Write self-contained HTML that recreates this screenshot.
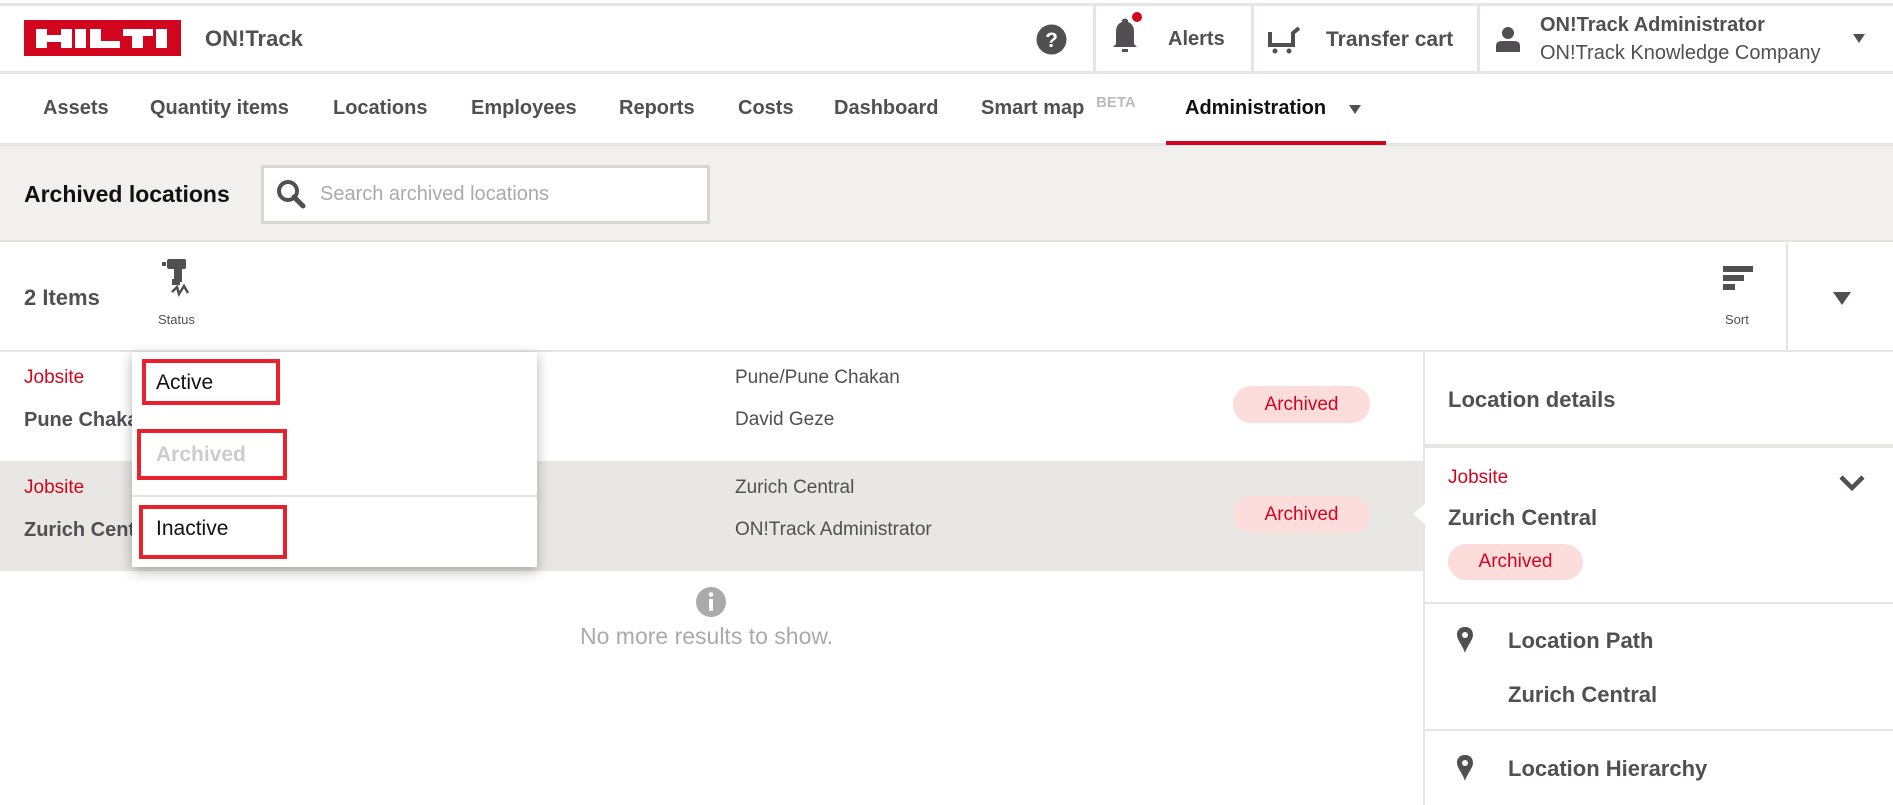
<!DOCTYPE html>
<html><head><meta charset="utf-8"><style>
*{margin:0;padding:0;box-sizing:border-box}
body{width:1893px;height:805px;overflow:hidden;background:#fff;font-family:"Liberation Sans",Arial,sans-serif;color:#524f53;position:relative}
.a{position:absolute;white-space:nowrap}
.b{font-weight:bold}
.nav{font-size:20px;font-weight:bold;top:97px}
.red{color:#d2051e}
.pill{position:absolute;background:#fddcdc;color:#d2051e;font-size:19px;border-radius:18px;text-align:center}
.box{position:absolute;border:4px solid #e8212c}
</style></head><body>
<div class="a" style="left:0;top:3px;width:1893px;height:3px;background:#e6e5e3"></div>
<svg class="a" style="left:24px;top:20px" width="157" height="36"><rect width="157" height="36" fill="#d2051e"/>
<g fill="#fff"><rect x="12" y="9" width="11" height="19"/><rect x="37" y="9" width="11" height="19"/><rect x="23" y="15" width="14" height="7"/>
<rect x="51" y="9" width="11" height="19"/>
<rect x="66" y="9" width="11" height="19"/><rect x="77" y="21" width="19" height="7"/>
<rect x="99" y="9" width="30" height="7"/><rect x="108" y="9" width="11" height="19"/>
<rect x="132" y="9" width="11" height="19"/></g></svg>
<div class="a b" style="left:205px;top:26px;font-size:22px">ON!Track</div>
<div class="a" style="left:0;top:71px;width:1893px;height:3px;background:#e6e5e3"></div>
<div class="a" style="left:1093px;top:5px;width:3px;height:66px;background:#e6e5e3"></div>
<div class="a" style="left:1251px;top:5px;width:3px;height:66px;background:#e6e5e3"></div>
<div class="a" style="left:1477px;top:5px;width:3px;height:66px;background:#e6e5e3"></div>
<svg class="a" style="left:1036px;top:24px" width="31" height="31"><circle cx="15.5" cy="15.5" r="15" fill="#524f53"/><text x="15.5" y="23" fill="#fff" font-size="21" font-weight="bold" text-anchor="middle" font-family="Liberation Sans">?</text></svg>
<svg class="a" style="left:1110px;top:12px" width="34" height="44"><path d="M6 32 L6 20 Q6 12 12 10 L12 8 Q15 5 18 8 L18 10 Q24 12 24 20 L24 32 L27 35 L3 35 Z" fill="#524f53"/><rect x="12" y="37" width="6" height="3" fill="#524f53"/><circle cx="27" cy="5" r="5" fill="#d2051e"/></svg>
<div class="a b" style="left:1168px;top:28px;font-size:20px">Alerts</div>
<svg class="a" style="left:1268px;top:26px" width="34" height="28"><path d="M2 6 V19 H25 V7 L31 2" fill="none" stroke="#524f53" stroke-width="4"/><circle cx="7" cy="25" r="2.5" fill="#524f53"/><circle cx="21" cy="25" r="2.5" fill="#524f53"/></svg>
<div class="a b" style="left:1326px;top:28px;font-size:21px">Transfer cart</div>
<svg class="a" style="left:1495px;top:27px" width="26" height="26"><circle cx="13" cy="6" r="6" fill="#524f53"/><path d="M1 25 V19 Q1 14 7 14 H19 Q25 14 25 19 V25 Z" fill="#524f53"/></svg>
<div class="a b" style="left:1540px;top:14px;font-size:20px">ON!Track Administrator</div>
<div class="a" style="left:1540px;top:42px;font-size:20px">ON!Track Knowledge Company</div>
<div class="a" style="left:1853px;top:34px;width:0;height:0;border-left:6px solid transparent;border-right:6px solid transparent;border-top:9px solid #524f53"></div>
<div class="a nav" style="left:43px">Assets</div>
<div class="a nav" style="left:150px">Quantity items</div>
<div class="a nav" style="left:333px">Locations</div>
<div class="a nav" style="left:471px">Employees</div>
<div class="a nav" style="left:619px">Reports</div>
<div class="a nav" style="left:738px">Costs</div>
<div class="a nav" style="left:834px">Dashboard</div>
<div class="a nav" style="left:981px">Smart map</div>
<div class="a b" style="left:1096px;top:94px;font-size:15px;color:#bbb">BETA</div>
<div class="a nav" style="left:1185px;color:#111">Administration</div>
<div class="a" style="left:1349px;top:105px;width:0;height:0;border-left:6px solid transparent;border-right:6px solid transparent;border-top:9px solid #524f53"></div>
<div class="a" style="left:0;top:143px;width:1893px;height:3px;background:#e6e5e3"></div>
<div class="a" style="left:1166px;top:141px;width:220px;height:4px;background:#d2051e"></div>
<div class="a" style="left:0;top:146px;width:1893px;height:96px;background:#f1f0ee;border-bottom:2px solid #e4e3e0"></div>
<div class="a b" style="left:24px;top:181px;font-size:23px;color:#111">Archived locations</div>
<div class="a" style="left:261px;top:165px;width:449px;height:59px;background:#fff;border:3px solid #d8d6d3"></div>
<svg class="a" style="left:276px;top:179px" width="30" height="30"><circle cx="12" cy="12" r="9" fill="none" stroke="#524f53" stroke-width="4"/><path d="M18 18 L27 27" stroke="#524f53" stroke-width="5" stroke-linecap="round"/></svg>
<div class="a" style="left:320px;top:183px;font-size:20px;color:#aaa">Search archived locations</div>
<div class="a b" style="left:24px;top:285px;font-size:22px">2 Items</div>
<svg class="a" style="left:162px;top:258px" width="40" height="42"><rect x="0" y="4" width="4" height="4" fill="#524f53"/><rect x="5" y="1" width="19" height="10" rx="2" fill="#524f53"/><rect x="12" y="9" width="8" height="15" fill="#524f53"/><rect x="10" y="21" width="8" height="6" fill="#524f53"/><path d="M10 34 L15 29 L17 36 L22 28 L26 35" fill="none" stroke="#524f53" stroke-width="2.5"/></svg>
<div class="a" style="left:158px;top:312px;font-size:13px">Status</div>
<svg class="a" style="left:1723px;top:266px" width="30" height="25"><rect x="0" y="0" width="30" height="6" fill="#524f53"/><rect x="0" y="9" width="21" height="6" fill="#524f53"/><rect x="0" y="18" width="12" height="6" fill="#524f53"/></svg>
<div class="a" style="left:1725px;top:312px;font-size:13px">Sort</div>
<div class="a" style="left:1786px;top:243px;width:2px;height:108px;background:#e6e5e3"></div>
<div class="a" style="left:1833px;top:292px;width:0;height:0;border-left:9px solid transparent;border-right:9px solid transparent;border-top:13px solid #524f53"></div>
<div class="a" style="left:0;top:350px;width:1893px;height:2px;background:#e6e5e3"></div>
<div class="a" style="left:0;top:461px;width:1423px;height:110px;background:#e8e7e4"></div>
<div class="a red" style="left:24px;top:367px;font-size:19px">Jobsite</div>
<div class="a b" style="left:24px;top:409px;font-size:20px">Pune Chakan</div>
<div class="a" style="left:735px;top:367px;font-size:19px">Pune/Pune Chakan</div>
<div class="a" style="left:735px;top:409px;font-size:19px">David Geze</div>
<div class="pill" style="left:1233px;top:386px;width:137px;height:37px;line-height:37px">Archived</div>
<div class="a red" style="left:24px;top:477px;font-size:19px">Jobsite</div>
<div class="a b" style="left:24px;top:519px;font-size:20px">Zurich Central</div>
<div class="a" style="left:735px;top:477px;font-size:19px">Zurich Central</div>
<div class="a" style="left:735px;top:519px;font-size:19px">ON!Track Administrator</div>
<div class="pill" style="left:1233px;top:496px;width:137px;height:37px;line-height:37px">Archived</div>
<svg class="a" style="left:695px;top:586px" width="32" height="32"><circle cx="16" cy="16" r="15" fill="#aaa"/><rect x="14" y="13" width="4" height="12" fill="#fff"/><circle cx="16" cy="8.5" r="2.3" fill="#fff"/></svg>
<div class="a" style="left:580px;top:623px;font-size:23px;color:#aaa">No more results to show.</div>
<div class="a" style="left:132px;top:352px;width:405px;height:215px;background:#fff;box-shadow:0 4px 12px rgba(0,0,0,.3)"></div>
<div class="a" style="left:132px;top:495px;width:405px;height:2px;background:#e6e5e3"></div>
<div class="a" style="left:156px;top:371px;font-size:21px;color:#111">Active</div>
<div class="a b" style="left:156px;top:443px;font-size:21px;color:#ccc">Archived</div>
<div class="a" style="left:156px;top:517px;font-size:21px;color:#111">Inactive</div>
<div class="box" style="left:142px;top:359px;width:138px;height:46px"></div>
<div class="box" style="left:137px;top:429px;width:150px;height:51px"></div>
<div class="box" style="left:139px;top:505px;width:148px;height:54px"></div>
<div class="a" style="left:1423px;top:352px;width:2px;height:453px;background:#e6e5e3"></div>
<div class="a" style="left:1413px;top:504px;width:0;height:0;border-top:10px solid transparent;border-bottom:10px solid transparent;border-right:12px solid #fff"></div>
<div class="a b" style="left:1448px;top:387px;font-size:22px">Location details</div>
<div class="a" style="left:1425px;top:444px;width:468px;height:4px;background:#e6e5e3"></div>
<div class="a red" style="left:1448px;top:467px;font-size:19px">Jobsite</div>
<svg class="a" style="left:1838px;top:474px" width="28" height="18"><path d="M3 3 L14 14 L25 3" fill="none" stroke="#524f53" stroke-width="4.5"/></svg>
<div class="a b" style="left:1448px;top:505px;font-size:22px">Zurich Central</div>
<div class="pill" style="left:1448px;top:544px;width:135px;height:36px;line-height:36px">Archived</div>
<div class="a" style="left:1425px;top:602px;width:468px;height:2px;background:#e6e5e3"></div>
<svg class="a" style="left:1456px;top:626px" width="18" height="28"><path d="M9 1 C3 1 1 5 1 9 C1 14 7 20 9 27 C11 20 17 14 17 9 C17 5 15 1 9 1 Z" fill="#524f53"/><circle cx="9" cy="9" r="3" fill="#fff"/></svg>
<div class="a b" style="left:1508px;top:628px;font-size:22px">Location Path</div>
<div class="a b" style="left:1508px;top:682px;font-size:22px">Zurich Central</div>
<div class="a" style="left:1425px;top:729px;width:468px;height:2px;background:#e6e5e3"></div>
<svg class="a" style="left:1456px;top:754px" width="18" height="28"><path d="M9 1 C3 1 1 5 1 9 C1 14 7 20 9 27 C11 20 17 14 17 9 C17 5 15 1 9 1 Z" fill="#524f53"/><circle cx="9" cy="9" r="3" fill="#fff"/></svg>
<div class="a b" style="left:1508px;top:756px;font-size:22px">Location Hierarchy</div>
</body></html>
